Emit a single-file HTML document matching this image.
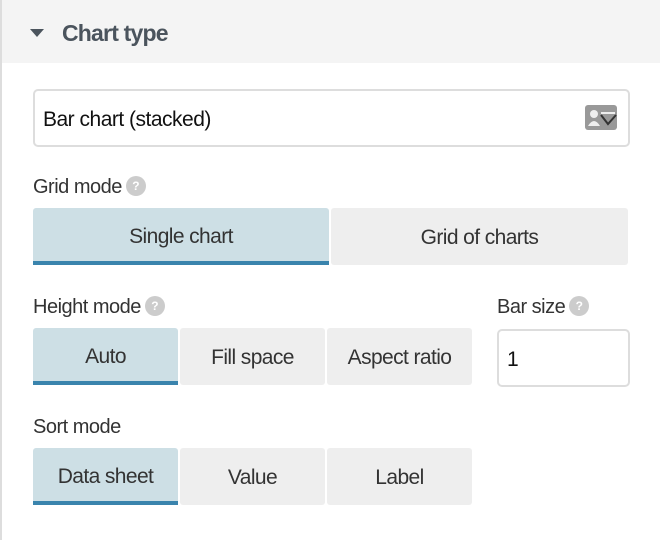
<!DOCTYPE html>
<html><head><style>
*{box-sizing:border-box;margin:0;padding:0}
body{width:660px;height:540px;background:#fff;font-family:"Liberation Sans",sans-serif;position:relative;overflow:hidden;color:#333}
.lb{position:absolute;left:0;top:0;width:2px;height:540px;background:#ddd}
.hdr{position:absolute;left:2px;top:0;width:658px;height:63px;background:#f4f4f4}
.tri{position:absolute;left:30px;top:29px;width:0;height:0;border-left:7px solid transparent;border-right:7px solid transparent;border-top:8px solid #4b545d}
.ttl{position:absolute;left:62px;top:20px;font-size:23px;font-weight:bold;color:#4b545d;letter-spacing:-0.8px}
.sel{position:absolute;left:33px;top:89px;width:597px;height:58px;border:2px solid #ddd;border-radius:5px;font-size:21px;line-height:57px;padding-left:8px;color:#111;letter-spacing:-0.5px}
.lbl{position:absolute;font-size:20px;color:#333;letter-spacing:-0.5px}
.q{display:inline-block;width:20px;height:20px;border-radius:50%;background:#ccc;color:#fff;font-size:12px;font-weight:bold;text-align:center;line-height:20px;vertical-align:middle;margin-left:4px;position:relative;top:-2px;letter-spacing:0}
.b{position:absolute;height:57px;background:#eee;border-radius:3px;font-size:21px;text-align:center;line-height:60px;color:#333;letter-spacing:-0.6px}
.b.on{background:#cddfe5;border-bottom:4px solid #3a84ad;line-height:58px;border-radius:3px 3px 0 0}
.inp{position:absolute;left:497px;top:329px;width:133px;height:58px;border:2px solid #ddd;border-radius:5px;font-size:21px;line-height:58px;padding-left:8px;color:#111}
</style></head><body>
<div class="lb"></div>
<div class="hdr"></div>
<div class="tri"></div>
<div class="ttl">Chart type</div>
<div class="sel">Bar chart (stacked)
<svg style="position:absolute;left:550px;top:14px" width="34" height="26" viewBox="0 0 34 26"><rect x="0" y="0" width="32" height="25" rx="3" fill="#999"/><circle cx="9" cy="9" r="4" fill="#eee"/><path d="M3 21 Q9 11 15 21Z" fill="#eee"/><rect x="16" y="7" width="14" height="2" fill="#eee"/><path d="M16 10 L23 19 L31 10" stroke="#333" stroke-width="2" fill="none"/></svg></div>
<div class="lbl" style="left:33px;top:176px">Grid mode<span class="q">?</span></div>
<div class="b on" style="left:33px;top:208px;width:296px">Single chart</div>
<div class="b" style="left:331px;top:208px;width:297px">Grid of charts</div>
<div class="lbl" style="left:33px;top:296px">Height mode<span class="q">?</span></div>
<div class="lbl" style="left:497px;top:296px">Bar size<span class="q">?</span></div>
<div class="b on" style="left:33px;top:328px;width:145px">Auto</div>
<div class="b" style="left:180px;top:328px;width:145px">Fill space</div>
<div class="b" style="left:327px;top:328px;width:145px">Aspect ratio</div>
<div class="inp">1</div>
<div class="lbl" style="left:33px;top:416px">Sort mode</div>
<div class="b on" style="left:33px;top:448px;width:145px">Data sheet</div>
<div class="b" style="left:180px;top:448px;width:145px">Value</div>
<div class="b" style="left:327px;top:448px;width:145px">Label</div>
</body></html>
